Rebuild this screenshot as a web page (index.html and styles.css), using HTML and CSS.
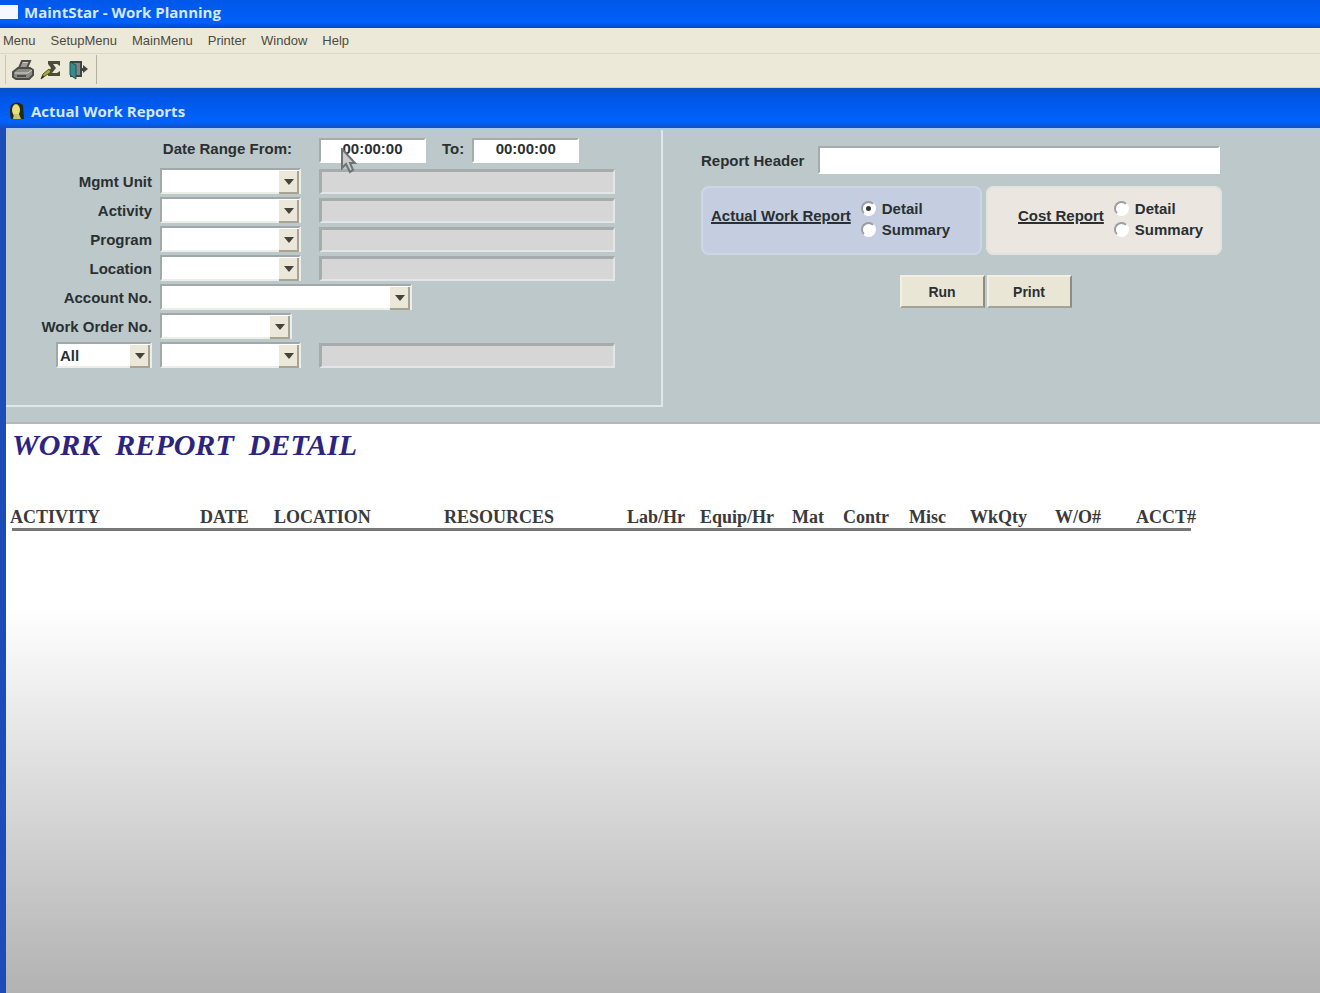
FILE: index.html
```html
<!DOCTYPE html>
<html lang="en">
<head>
    <meta charset="UTF-8">
    <meta name="viewport" content="width=device-width, initial-scale=1.0">
    <title>MaintStar - Work Planning</title>
    <link rel="stylesheet" href="styles.css">
</head>
<body>

    <!-- Application window -->
    <header class="app-title">
        <span class="app-icon"></span>
        <h1>MaintStar - Work Planning</h1>
    </header>

    <nav class="menu-bar">
        <a href="#">Menu</a>
        <a href="#">SetupMenu</a>
        <a href="#">MainMenu</a>
        <a href="#">Printer</a>
        <a href="#">Window</a>
        <a href="#">Help</a>
    </nav>

    <div class="toolbar">
        <div class="tool-group">
            <button type="button" aria-label="Print">
                <svg width="22" height="20" viewBox="0 0 22 20">
                    <path d="M7 8 L10 1 H18 L15 8 Z" fill="#d0cec4" stroke="#4c4c48" stroke-width="2"/>
                    <path d="M10 4 H16 M9 6 H15" stroke="#6c6c66"/>
                    <path d="M1 12 L6 8 H18 L21 10 V15 L17 19 H4 L1 17 Z" fill="#8b8b86" stroke="#4c4c48" stroke-width="2"/>
                    <path d="M3 13 H16 L20 10" fill="none" stroke="#d8d6cc"/>
                    <path d="M5 16 H14" stroke="#4c4c48" stroke-width="2"/>
                </svg>
            </button>
            <button type="button" aria-label="Edit">
                <svg width="22" height="20" viewBox="0 0 22 20">
                    <path d="M8 1 H20 V6 L17 4 H13 L16 8 L12 13 H17 L20 11 V16 H8 V13 L11 8 L8 4 Z" fill="#4d4c38"/>
                    <path d="M1 19 L3 14 L9 9 L11 12 L5 16 Z" fill="#a9ad3a" stroke="#4e5426"/>
                    <path d="M1 19 L3 15 L4 17 Z" fill="#23231c"/>
                </svg>
            </button>
            <button type="button" aria-label="Exit">
                <svg width="22" height="20" viewBox="0 0 22 20">
                    <path d="M3 2 H13 V16 H3 Z" fill="#7b8583" stroke="#3b4544" stroke-width="2"/>
                    <path d="M2 2 L8 5 V19 L2 15 Z" fill="#2f8f8c" stroke="#2c4e50"/>
                    <path d="M12 8 H15 V5 L20 9 L15 13 V11 H12 Z" fill="#44443e"/>
                </svg>
            </button>
        </div>
    </div>

    <!-- Report window -->
    <main class="report-window">
        <header class="window-title">
            <svg width="16" height="18" viewBox="0 0 16 18">
                <path d="M2 3 Q8 -2 14 3 L15 17 H2 Q0 10 2 3 Z" fill="#222a1c"/>
                <ellipse cx="7" cy="8" rx="4" ry="6" fill="#e6df7c"/>
                <path d="M5 12 H10 L12 17 H4 Z" fill="#c9c66c"/>
                <path d="M4 4 Q8 1 11 5 L10 3 H5 Z" fill="#4d4a22"/>
            </svg>
            <h2>Actual Work Reports</h2>
        </header>

        <div class="form-area">
            <form class="filters">
                <div class="row date-row">
                    <label class="date-label" for="date-from">Date Range From:</label>
                    <div class="date-box">
                        <input type="text" id="date-from" value="00:00:00">
                        <svg class="cursor" width="16" height="26" viewBox="0 0 16 26">
                            <path d="M1 1 V20 L5 16 L9 24 L12 22 L9 15 H14 Z" fill="#c9cccb" stroke="#6f7372" stroke-width="2"/>
                        </svg>
                    </div>
                    <label class="to-label" for="date-to">To:</label>
                    <div class="date-box">
                        <input type="text" id="date-to" value="00:00:00">
                    </div>
                </div>
                <div class="row">
                    <label class="field-label" for="mgmt-unit">Mgmt Unit</label>
                    <div class="combo"><select id="mgmt-unit"><option></option></select></div>
                    <input type="text" class="readout" aria-label="Mgmt Unit name" readonly>
                </div>
                <div class="row">
                    <label class="field-label" for="activity">Activity</label>
                    <div class="combo"><select id="activity"><option></option></select></div>
                    <input type="text" class="readout" aria-label="Activity name" readonly>
                </div>
                <div class="row">
                    <label class="field-label" for="program">Program</label>
                    <div class="combo"><select id="program"><option></option></select></div>
                    <input type="text" class="readout" aria-label="Program name" readonly>
                </div>
                <div class="row">
                    <label class="field-label" for="location">Location</label>
                    <div class="combo"><select id="location"><option></option></select></div>
                    <input type="text" class="readout" aria-label="Location name" readonly>
                </div>
                <div class="row">
                    <label class="field-label" for="account">Account No.</label>
                    <div class="combo combo-wide"><select id="account"><option></option></select></div>
                </div>
                <div class="row">
                    <label class="field-label" for="work-order">Work Order No.</label>
                    <div class="combo combo-short"><select id="work-order"><option></option></select></div>
                </div>
                <div class="row">
                    <div class="combo combo-type"><select aria-label="Resource type"><option>All</option></select></div>
                    <div class="combo"><select aria-label="Resource"><option></option></select></div>
                    <input type="text" class="readout" aria-label="Resource name" readonly>
                </div>
            </form>

            <form class="options">
                <div class="header-row">
                    <label for="report-header">Report Header</label>
                    <input type="text" id="report-header">
                </div>
                <div class="report-types">
                    <fieldset class="type-box work" aria-labelledby="work-name">
                        <span class="type-name" id="work-name">Actual Work Report</span>
                        <div class="choices">
                            <label><input type="radio" name="report" checked>Detail</label>
                            <label><input type="radio" name="report">Summary</label>
                        </div>
                    </fieldset>
                    <fieldset class="type-box cost" aria-labelledby="cost-name">
                        <span class="type-name" id="cost-name">Cost Report</span>
                        <div class="choices">
                            <label><input type="radio" name="report">Detail</label>
                            <label><input type="radio" name="report">Summary</label>
                        </div>
                    </fieldset>
                </div>
                <div class="actions">
                    <button type="button">Run</button>
                    <button type="button">Print</button>
                </div>
            </form>
        </div>

        <section class="report">
            <h2 class="report-title">WORK  REPORT  DETAIL</h2>
            <table class="report-table">
                <colgroup>
                    <col class="col-activity">
                    <col class="col-date">
                    <col class="col-location">
                    <col class="col-resources">
                    <col class="col-labor">
                    <col class="col-equip">
                    <col class="col-mat">
                    <col class="col-contr">
                    <col class="col-misc">
                    <col class="col-qty">
                    <col class="col-wo">
                    <col class="col-acct">
                </colgroup>
                <thead>
                    <tr>
                        <th>ACTIVITY</th>
                        <th>DATE</th>
                        <th>LOCATION</th>
                        <th>RESOURCES</th>
                        <th>Lab/Hr</th>
                        <th>Equip/Hr</th>
                        <th>Mat</th>
                        <th>Contr</th>
                        <th>Misc</th>
                        <th>WkQty</th>
                        <th>W/O#</th>
                        <th>ACCT#</th>
                    </tr>
                </thead>
            </table>
            <hr class="report-line">
        </section>
    </main>

</body>
</html>
```
FILE: styles.css
```css
/* Global styles */
* {
    box-sizing: border-box;
}

body {
    display: flex;
    flex-direction: column;
    min-height: 100vh;
    margin: 0;
    font-family: "Liberation Sans", Arial, sans-serif;
    font-size: 15px;
    color: #2a3032;
    background-color: #ece9d8;
}

h1, h2 {
    margin: 0;
}

input, select, button {
    font: inherit;
    color: inherit;
    border-radius: 0;
}

/* Title bars */
.app-title, .window-title {
    display: flex;
    align-items: center;
    gap: 6px;
    color: #d6e8ff;
}

.app-title {
    height: 28px;
    padding-bottom: 4px;
    background: linear-gradient(#0058e8, #0060fa 80%, #0048d0);
}

.app-icon {
    width: 18px;
    height: 14px;
    background-color: #f6f8ff;
}

.app-title h1, .window-title h2 {
    font-family: "Open Sans", sans-serif;
    font-size: 15px;
    font-weight: 700;
}

.window-title {
    height: 40px;
    padding: 5px 9px 0;
    background: linear-gradient(#0a50c8, #0056e8 25%, #0062fc 85%, #1450c0);
}

/* Menu and toolbar */
.menu-bar {
    display: flex;
    align-items: center;
    gap: 15px;
    height: 26px;
    padding-left: 3px;
    border-bottom: 1px solid #dcd8c8;
}

.menu-bar a {
    font-size: 13px;
    color: #4c4a42;
    text-decoration: none;
}

.toolbar {
    height: 34px;
    padding: 1px 5px;
    border-bottom: 1px solid #d8d0b0;
}

.tool-group {
    display: inline-flex;
    align-items: center;
    gap: 6px;
    height: 29px;
    padding: 0 6px;
    border-left: 1px solid #c8c4b4;
    border-right: 1px solid #b4b0a0;
}

.tool-group button {
    display: flex;
    padding: 0;
    border: none;
    background: none;
}

/* Report window */
.report-window {
    display: flex;
    flex: 1;
    flex-direction: column;
    background-color: #1c4cb8;
}

.form-area {
    display: flex;
    height: 296px;
    margin-left: 6px;
    border-top: 2px solid #a8c8ee;
    border-bottom: 2px solid #b4b8b8;
    background-color: #bdc8ca;
    font-weight: bold;
}

/* Filters */
.filters {
    display: flex;
    flex-direction: column;
    gap: 3px;
    width: 50%;
    height: 277px;
    padding: 7px 46px 0 34px;
    border-right: 2px solid #dce8ea;
    border-bottom: 2px solid #dce8ea;
}

.row {
    display: flex;
    align-items: center;
    height: 26px;
}

.row label {
    flex-shrink: 0;
    text-align: right;
    white-space: nowrap;
}

.field-label {
    width: 112px;
    margin-right: 8px;
}

.date-row {
    margin-bottom: 2px;
}

.date-label {
    width: 252px;
    padding-bottom: 3px;
    margin-right: 27px;
}

.to-label {
    padding-bottom: 3px;
    margin: 0 8px 0 16px;
}

.date-box {
    position: relative;
    width: 107px;
}

.date-box input {
    width: 100%;
    height: 25px;
    padding: 0 0 3px;
    border: 2px solid #fff;
    border-top-color: #a4acac;
    border-left-color: #a4acac;
    text-align: center;
    font-weight: bold;
}

.cursor {
    position: absolute;
    top: 10px;
    left: 22px;
}

.combo {
    position: relative;
    width: 141px;
    height: 26px;
    flex-shrink: 0;
    margin-right: 18px;
}

.combo-wide {
    width: 252px;
}

.combo-short {
    width: 132px;
}

.combo-type {
    width: 96px;
    margin-left: 16px;
    margin-right: 8px;
}

.combo select {
    width: 100%;
    height: 100%;
    padding: 0 2px;
    appearance: none;
    border: 2px solid #eceee8;
    border-top-color: #a0a8a8;
    border-left-color: #a0a8a8;
    background-color: #fff;
    font-weight: bold;
}

/* Drop-down button */
.combo::before {
    content: "";
    position: absolute;
    top: 3px;
    right: 2px;
    width: 18px;
    height: 21px;
    border-right: 2px solid #a8a494;
    border-bottom: 2px solid #a8a494;
    background-color: #ebe8da;
    pointer-events: none;
}

.combo::after {
    content: "";
    position: absolute;
    top: 11px;
    right: 7px;
    border: 5px solid transparent;
    border-top: 6px solid #45443a;
    border-bottom: none;
    pointer-events: none;
}

.readout {
    flex: 1;
    min-width: 0;
    height: 25px;
    border: 2px solid #e2e6e6;
    border-top: 3px solid #a6abab;
    border-left: 3px solid #a6abab;
    background-color: #d6d6d6;
}

/* Report options */
.options {
    flex: 1;
    padding: 16px 98px 0 38px;
}

.header-row {
    display: flex;
    align-items: center;
    gap: 14px;
    margin-right: 2px;
}

.header-row label {
    flex-shrink: 0;
}

.header-row input {
    flex: 1;
    min-width: 0;
    height: 28px;
    border: 2px solid #fff;
    border-top-color: #a4acac;
    border-left-color: #a4acac;
}

.report-types {
    display: grid;
    grid-template-columns: 281fr 236fr;
    gap: 4px;
    margin-top: 12px;
}

.type-box {
    display: flex;
    gap: 10px;
    height: 69px;
    min-width: 0;
    margin: 0;
    padding: 10px 8px;
    border: 2px solid;
    border-radius: 8px;
    white-space: nowrap;
}

.work {
    border-color: #ccd6e6;
    background-color: #c4cee0;
}

.cost {
    padding-left: 30px;
    border-color: #e4e2de;
    background-color: #ece6e0;
}

.type-name {
    padding-top: 9px;
    text-decoration: underline;
    text-decoration-thickness: 2px;
}

.choices label {
    display: flex;
    align-items: center;
    gap: 6px;
    height: 21px;
}

.choices input {
    display: grid;
    place-items: center;
    width: 15px;
    height: 15px;
    margin: 0;
    appearance: none;
    border: 2px solid #fff;
    border-top-color: #9c9e9e;
    border-left-color: #9c9e9e;
    border-radius: 50%;
    background-color: #fff;
}

.choices input:checked::before {
    content: "";
    width: 5px;
    height: 5px;
    border-radius: 50%;
    background-color: #30343c;
}

.actions {
    display: flex;
    justify-content: center;
    gap: 2px;
    margin-top: 20px;
    padding-left: 48px;
}

.actions button {
    width: 85px;
    height: 33px;
    padding: 0;
    border: 2px solid #f2f0e2;
    border-right-color: #8e8c80;
    border-bottom-color: #a4a294;
    background-color: #e9e6d6;
    font-size: 14px;
    font-weight: bold;
}

/* Report page */
.report {
    flex: 1;
    padding: 2px 0 2px 4px;
    margin-left: 6px;
    background: linear-gradient(#fff 32%, #b2b2b2);
    font-family: "Liberation Serif", "Times New Roman", serif;
}

.report-title {
    padding-left: 2px;
    font-size: 30px;
    line-height: 38px;
    font-style: italic;
    color: #2c2480;
    white-space: pre;
}

.report-table {
    width: 91%;
    margin-top: 42px;
    border-collapse: collapse;
    table-layout: fixed;
    font-size: 18px;
    line-height: 22px;
    color: #3a3a3a;
}

.report-table th {
    padding: 0;
    text-align: left;
    white-space: nowrap;
}

.col-activity { width: 190px; }
.col-date { width: 74px; }
.col-location { width: 170px; }
.col-resources { width: 183px; }
.col-labor { width: 73px; }
.col-equip { width: 92px; }
.col-mat { width: 51px; }
.col-contr { width: 66px; }
.col-misc { width: 61px; }
.col-qty { width: 85px; }
.col-wo { width: 81px; }

.report-line {
    width: 90%;
    height: 3px;
    margin: 0 0 0 2px;
    border: none;
    background-color: #777;
}
```
